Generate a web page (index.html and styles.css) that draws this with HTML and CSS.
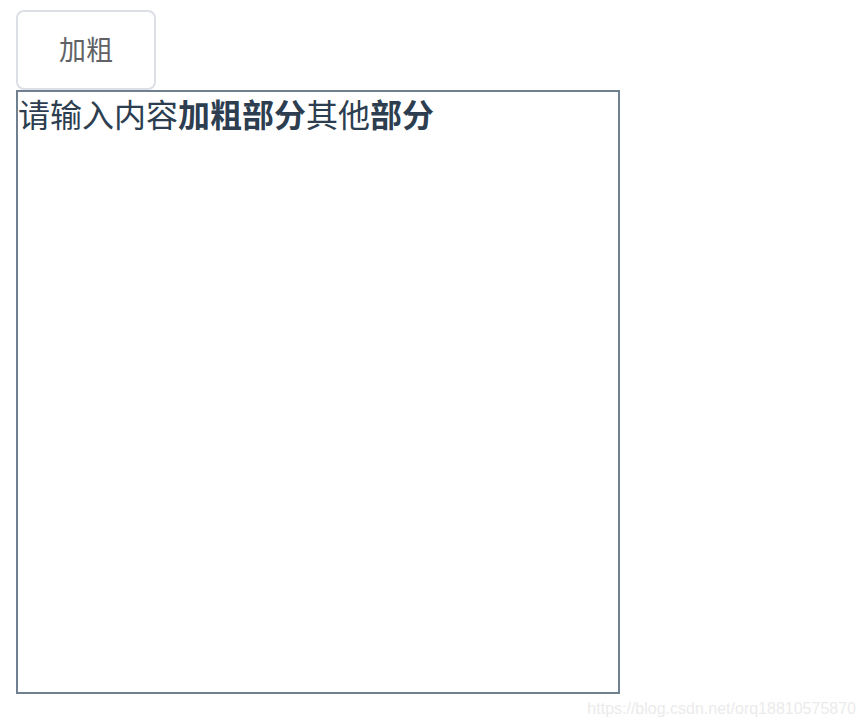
FILE: index.html
```html
<!DOCTYPE html>
<html>
<head>
<meta charset="utf-8">
<link rel="stylesheet" href="styles.css">
</head>
<body>
<div class="page">
  <button class="btn">加粗</button>
  <div class="editor" contenteditable="true">请输入内容<b>加粗部分</b>其他<b>部分</b></div>
</div>
<div class="watermark">https://blog.csdn.net/orq18810575870</div>
</body>
</html>
```
FILE: styles.css
```css
html, body {
  margin: 0;
  padding: 0;
  background: #fff;
}
body {
  font-family: "Noto Sans CJK SC", "Noto Sans", sans-serif;
  color: #2c3e50;
}
.page {
  padding: 10px 0 0 16px;
  display: flex;
  flex-direction: column;
  align-items: flex-start;
}
.btn {
  width: 140px;
  height: 80px;
  box-sizing: border-box;
  border: 2px solid #dcdfe6;
  border-radius: 8px;
  background: #fff;
  color: #606266;
  font-family: "Noto Sans CJK SC", sans-serif;
  font-size: 27px;
  padding: 0 0 3px 0;
  margin: 0;
}
.editor {
  width: 604px;
  height: 604px;
  box-sizing: border-box;
  border: 2px solid #708090;
  font-size: 32px;
  line-height: 42px;
  outline: none;
  margin: 0;
}
.editor b {
  font-weight: 700;
}
.watermark {
  position: absolute;
  right: 10px;
  top: 700px;
  font-family: "Liberation Sans", Arial, sans-serif;
  font-size: 16px;
  color: #ebebeb;
}
```
